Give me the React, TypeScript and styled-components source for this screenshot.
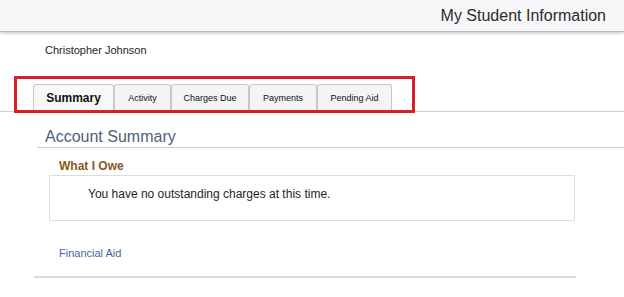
import styled, { createGlobalStyle } from "styled-components";

const GlobalStyle = createGlobalStyle`
  html, body {
    margin: 0;
    padding: 0;
    background: #fff;
    font-family: "Liberation Sans", Arial, sans-serif;
  }
`;

const tabs = [
  { label: "Summary", width: 81, active: true },
  { label: "Activity", width: 57 },
  { label: "Charges Due", width: 78 },
  { label: "Payments", width: 68 },
  { label: "Pending Aid", width: 75 },
];

const App = function () {
  return (
    <>
      <GlobalStyle />
      <Page>
        <TopBar>
          <Title>My Student Information</Title>
        </TopBar>
        <StudentName>Christopher Johnson</StudentName>
        <TabRow>
          <Highlight>
            {tabs.map((t) => (
              <Tab key={t.label} $active={!!t.active} $width={t.width}>
                {t.label}
              </Tab>
            ))}
          </Highlight>
        </TabRow>
        <SectionHeading>Account Summary</SectionHeading>
        <SubHeading>What I Owe</SubHeading>
        <MessageBox>You have no outstanding charges at this time.</MessageBox>
        <AidLink href="#">Financial Aid</AidLink>
        <BottomRule />
      </Page>
    </>
  );
};

export default App;

const Page = styled.div`
  width: 624px;
  height: 297px;
  overflow: hidden;
  background: #fff;
`;

const TopBar = styled.header`
  height: 31px;
  background: #f7f7f9;
  border-bottom: 1px solid #b9b9bb;
  box-shadow: 0 1px 3px rgba(0, 0, 0, 0.25);
  display: flex;
  align-items: center;
  justify-content: flex-end;
  padding-right: 18px;
`;

const Title = styled.h1`
  margin: 0;
  font-size: 16px;
  font-weight: normal;
  color: #2b2b2b;
`;

const StudentName = styled.div`
  margin: 12px 0 0 45px;
  font-size: 11px;
  color: #222;
  line-height: 13px;
`;

const TabRow = styled.div`
  margin-top: 19px;
  border-bottom: 1px solid #d0d0d0;
`;

const Highlight = styled.div`
  width: 379px;
  height: 31px;
  margin: 0 0 -2px 14px;
  border: 3px solid #d81f2a;
  display: flex;
  align-items: flex-end;
  padding-left: 16px;
  box-sizing: content-box;
  position: relative;
`;

const Tab = styled.div<{ $active: boolean; $width: number }>`
  width: ${(p) => p.$width}px;
  height: 26px;
  box-sizing: border-box;
  border: 1px solid #c8c8c8;
  border-bottom: none;
  border-radius: 3px 3px 0 0;
  background: ${(p) => (p.$active ? "#f8f8f8" : "#f4f4f4")};
  display: flex;
  align-items: center;
  justify-content: center;
  color: #111;
  font-size: ${(p) => (p.$active ? "12px" : "9px")};
  font-weight: ${(p) => (p.$active ? "bold" : "normal")};
`;

const SectionHeading = styled.h2`
  margin: 15px 0 0 37px;
  padding: 0 0 1px 8px;
  font-size: 16px;
  font-weight: normal;
  color: #4f5f7b;
  line-height: 19px;
  border-bottom: 1px solid #cfcfcf;
`;

const SubHeading = styled.h3`
  margin: 11px 0 0 59px;
  font-size: 12px;
  font-weight: bold;
  color: #8a5720;
  line-height: 14px;
`;

const MessageBox = styled.div`
  margin: 2px 0 0 49px;
  width: 526px;
  height: 46px;
  box-sizing: border-box;
  border: 1px solid #dcdcdc;
  padding: 11px 0 0 38px;
  font-size: 12px;
  line-height: 14px;
  color: #1e1e1e;
`;

const AidLink = styled.a`
  display: block;
  margin: 26px 0 0 59px;
  font-size: 11px;
  line-height: 13px;
  color: #3f679c;
  text-decoration: none;
`;

const BottomRule = styled.div`
  margin: 16px 0 0 34px;
  width: 542px;
  height: 2px;
  background: #dadada;
`;
